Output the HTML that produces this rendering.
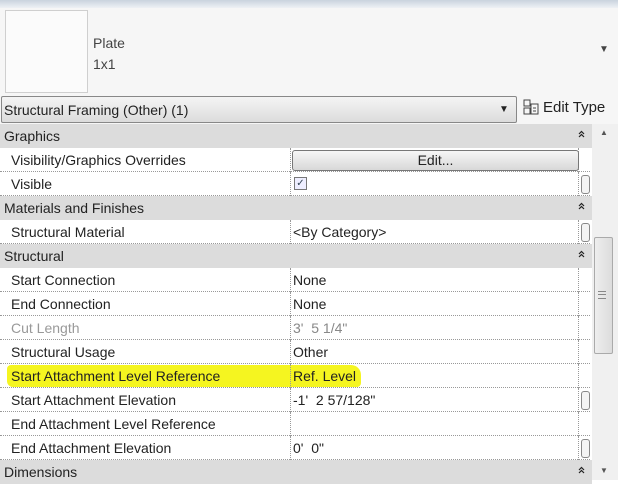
<!DOCTYPE html>
<html><head><style>
body{margin:0;width:618px;height:480px;overflow:hidden;background:#fff;font-family:"Liberation Sans",sans-serif;font-size:14px;color:#222;position:relative}
.a{position:absolute}
.row{position:absolute;left:0;width:590px;height:24px;border-bottom:1px dotted #999;box-sizing:border-box}
.row .l{position:absolute;left:11px;top:4px}
.row .v{position:absolute;left:293px;top:4px}
.row .d{position:absolute;left:290px;top:0;height:24px;border-left:1px dotted #999}
.row .e{position:absolute;left:578px;top:0;height:24px;border-left:1px dotted #999}
.hd{position:absolute;left:0;width:592px;height:24px;background:#dcdcdc}
.hd span{position:absolute;left:4px;top:4px}
.hd svg{position:absolute;left:578px;top:6px}
.pill{position:absolute;left:581px;top:3px;width:7px;height:17px;border:1px solid #888;border-radius:3px;background:#f4f4f4}
</style></head><body>
<div class="a" style="left:0;top:0;width:618px;height:8px;background:linear-gradient(#c9d3de,#eef1f5)"></div>
<div class="a" style="left:0;top:8px;width:618px;height:116px;background:#f6f6f6"></div>
<div class="a" style="left:5px;top:10px;width:81px;height:81px;border:1px solid #cfcfcf;background:#fbfbfb"></div>
<div class="a" style="left:93px;top:35px;color:#444">Plate</div>
<div class="a" style="left:93px;top:56px;color:#444">1x1</div>
<div class="a" style="left:599px;top:44px;font-size:10px;color:#444">▼</div>
<div class="a" style="left:1px;top:96px;height:25px;border:1px solid #888;border-radius:2px;background:linear-gradient(#f4f4f4,#dcdcdc);width:514px"></div>
<div class="a" style="left:4px;top:102px">Structural Framing (Other) (1)</div>
<div class="a" style="left:499px;top:104px;font-size:10px">▼</div>
<svg class="a" style="left:523px;top:99px" width="16" height="16"><rect x="1" y="1" width="6" height="6" fill="none" stroke="#444"/><rect x="1" y="9" width="6" height="6" fill="none" stroke="#444"/><rect x="8" y="5" width="7" height="10" fill="none" stroke="#444"/><line x1="10" y1="9" x2="13" y2="9" stroke="#444"/><line x1="10" y1="12" x2="13" y2="12" stroke="#444"/></svg>
<div class="a" style="left:543px;top:99px;font-size:15px">Edit Type</div>

<div class="hd" style="top:124px"><span>Graphics</span><svg width="7" height="8"><path d="M1 4L3.5 1.5L6 4M1 7L3.5 4.5L6 7" fill="none" stroke="#222" stroke-width="1.2"/></svg></div>
<div class="row" style="top:148px"><span class="l">Visibility/Graphics Overrides</span><div class="d"></div><div class="e"></div>
<div class="a" style="left:292px;top:2px;width:285px;height:19px;border:1px solid #777;border-radius:3px;background:linear-gradient(#f6f6f6,#d8d8d8);text-align:center;line-height:19px">Edit...</div></div>
<div class="row" style="top:172px"><span class="l">Visible</span><div class="d"></div><div class="e"></div>
<div class="a" style="left:294px;top:5px;width:11px;height:11px;border:1px solid #777;background:#eef;font-size:10px;line-height:11px;text-align:center;color:#345">✓</div><div class="pill"></div></div>
<div class="hd" style="top:196px"><span>Materials and Finishes</span><svg width="7" height="8"><path d="M1 4L3.5 1.5L6 4M1 7L3.5 4.5L6 7" fill="none" stroke="#222" stroke-width="1.2"/></svg></div>
<div class="row" style="top:220px"><span class="l">Structural Material</span><div class="d"></div><div class="e"></div><span class="v">&lt;By Category&gt;</span><div class="pill"></div></div>
<div class="hd" style="top:244px"><span>Structural</span><svg width="7" height="8"><path d="M1 4L3.5 1.5L6 4M1 7L3.5 4.5L6 7" fill="none" stroke="#222" stroke-width="1.2"/></svg></div>
<div class="row" style="top:268px"><span class="l">Start Connection</span><div class="d"></div><div class="e"></div><span class="v">None</span></div>
<div class="row" style="top:292px"><span class="l">End Connection</span><div class="d"></div><div class="e"></div><span class="v">None</span></div>
<div class="row" style="top:316px"><span class="l" style="color:#999">Cut Length</span><div class="d"></div><div class="e"></div><span class="v" style="color:#888">3'&nbsp; 5 1/4"</span></div>
<div class="row" style="top:340px"><span class="l">Structural Usage</span><div class="d"></div><div class="e"></div><span class="v">Other</span></div>
<div class="a" style="left:7px;top:365px;width:354px;height:22px;background:#f5f520;border-radius:4px 10px 4px 6px"></div>
<div class="row" style="top:364px"><span class="l">Start Attachment Level Reference</span><div class="d"></div><div class="e"></div><span class="v">Ref. Level</span></div>
<div class="row" style="top:388px"><span class="l">Start Attachment Elevation</span><div class="d"></div><div class="e"></div><span class="v">-1'&nbsp; 2 57/128"</span><div class="pill"></div></div>
<div class="row" style="top:412px"><span class="l">End Attachment Level Reference</span><div class="d"></div><div class="e"></div></div>
<div class="row" style="top:436px"><span class="l">End Attachment Elevation</span><div class="d"></div><div class="e"></div><span class="v">0'&nbsp; 0"</span><div class="pill"></div></div>
<div class="hd" style="top:460px"><span>Dimensions</span><svg width="7" height="8"><path d="M1 4L3.5 1.5L6 4M1 7L3.5 4.5L6 7" fill="none" stroke="#222" stroke-width="1.2"/></svg></div>

<div class="a" style="left:592px;top:124px;width:26px;height:356px;background:#f0f0f0"></div>
<div class="a" style="left:600px;top:128px;font-size:8px;color:#555">▲</div>
<div class="a" style="left:600px;top:466px;font-size:8px;color:#555">▼</div>
<div class="a" style="left:594px;top:237px;width:17px;height:115px;border:1px solid #aaa;border-radius:2px;background:linear-gradient(90deg,#eee,#dcdcdc)"></div>
<div class="a" style="left:598px;top:291px;width:8px;height:6px;border-top:1px solid #888;border-bottom:1px solid #888"></div>
<div class="a" style="left:598px;top:294px;width:8px;border-top:1px solid #888"></div>
</body></html>
